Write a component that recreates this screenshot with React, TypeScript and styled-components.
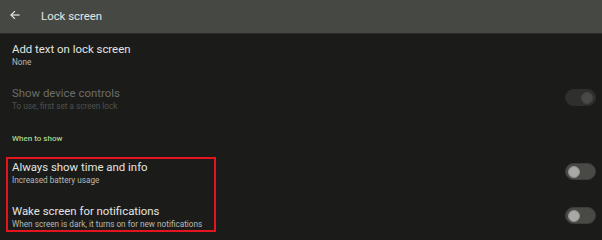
import React from 'react';
import styled, { createGlobalStyle } from 'styled-components';

const GlobalStyle = createGlobalStyle`
  html, body {
    margin: 0;
    padding: 0;
    background: #1b1c1a;
  }
  body {
    font-family: Roboto, "Noto Sans", sans-serif;
    -webkit-font-smoothing: antialiased;
  }
`;

const Page = styled.div`
  width: 602px;
  height: 240px;
  background: #1b1c1a;
  overflow: hidden;
  display: flex;
  flex-direction: column;
`;

const TopBar = styled.div`
  height: 33px;
  flex: 0 0 33px;
  display: flex;
  align-items: center;
  background: #464843;
  border-bottom: 1px solid #2b2c2a;
`;

const BackButton = styled.div`
  width: 30px;
  height: 33px;
  display: flex;
  align-items: center;
  justify-content: center;
  margin-top: -3px;
`;

const Title = styled.div`
  margin-left: 11px;
  color: #e6e6e2;
  font-size: 11.4px;
  margin-top: -1px;
`;

const Row = styled.div<{ $height?: number }>`
  height: ${p => p.$height ?? 44}px;
  flex: 0 0 auto;
  display: flex;
  align-items: center;
  padding: 0 6px 0 12px;
`;

const TextBlock = styled.div`
  flex: 1;
  display: flex;
  flex-direction: column;
  margin-top: -2px;
`;

const ItemTitle = styled.div<{ $disabled?: boolean }>`
  font-size: 11.4px;
  line-height: 14px;
  color: ${p => (p.$disabled ? '#6c6d69' : '#e4e4e0')};
`;

const ItemSub = styled.div<{ $disabled?: boolean }>`
  font-size: 8.2px;
  line-height: 11px;
  margin-top: 1px;
  color: ${p => (p.$disabled ? '#4f504d' : '#b8b9b5')};
`;

const SectionLabel = styled.div`
  height: 30px;
  flex: 0 0 30px;
  display: flex;
  align-items: center;
  padding-left: 12px;
  padding-top: 3px;
  box-sizing: border-box;
  font-size: 8px;
  font-weight: 500;
  color: #a9d28f;
`;

const Highlighted = styled.div`
  position: relative;
  display: flex;
  flex-direction: column;
`;

const RedFrame = styled.div`
  position: absolute;
  left: 6px;
  top: 5px;
  width: 210px;
  height: 75px;
  border: 2px solid #e5141e;
  box-sizing: border-box;
  pointer-events: none;
`;

const Track = styled.div<{ $disabled?: boolean }>`
  width: 31px;
  height: 17px;
  border-radius: 9px;
  box-sizing: border-box;
  padding: 2px;
  display: flex;
  justify-content: ${p => (p.$disabled ? 'flex-end' : 'flex-start')};
  align-items: center;
  background: ${p => (p.$disabled ? '#2f302e' : '#494a46')};
  border: 1px solid ${p => (p.$disabled ? '#2f302e' : '#3d3e3b')};
  margin-top: -5px;
`;

const Thumb = styled.div<{ $disabled?: boolean }>`
  width: 12px;
  height: 12px;
  border-radius: 50%;
  background: ${p => (p.$disabled ? '#494a47' : '#a8a9a5')};
  border: 1px solid ${p => (p.$disabled ? '#444542' : '#8f908c')};
  box-sizing: border-box;
`;

function Toggle({ disabled }: { disabled?: boolean }) {
  return (
    <Track $disabled={disabled}>
      <Thumb $disabled={disabled} />
    </Track>
  );
}

function BackArrow() {
  return (
    <svg width="12" height="12" viewBox="0 0 24 24" fill="none" stroke="#e8e8e4" strokeWidth="2.4" strokeLinecap="square">
      <path d="M20 12H5" />
      <path d="M11 5l-7 7 7 7" />
    </svg>
  );
}

export default function App() {
  return (
    <>
      <GlobalStyle />
      <Page>
        <TopBar>
          <BackButton>
            <BackArrow />
          </BackButton>
          <Title>Lock screen</Title>
        </TopBar>

        <Row>
          <TextBlock>
            <ItemTitle>Add text on lock screen</ItemTitle>
            <ItemSub>None</ItemSub>
          </TextBlock>
        </Row>

        <Row>
          <TextBlock>
            <ItemTitle $disabled>Show device controls</ItemTitle>
            <ItemSub $disabled>To use, first set a screen lock</ItemSub>
          </TextBlock>
          <Toggle disabled />
        </Row>

        <SectionLabel>When to show</SectionLabel>

        <Highlighted>
          <Row>
            <TextBlock>
              <ItemTitle>Always show time and info</ItemTitle>
              <ItemSub>Increased battery usage</ItemSub>
            </TextBlock>
            <Toggle />
          </Row>
          <Row>
            <TextBlock>
              <ItemTitle>Wake screen for notifications</ItemTitle>
              <ItemSub>When screen is dark, it turns on for new notifications</ItemSub>
            </TextBlock>
            <Toggle />
          </Row>
          <RedFrame />
        </Highlighted>
      </Page>
    </>
  );
}
